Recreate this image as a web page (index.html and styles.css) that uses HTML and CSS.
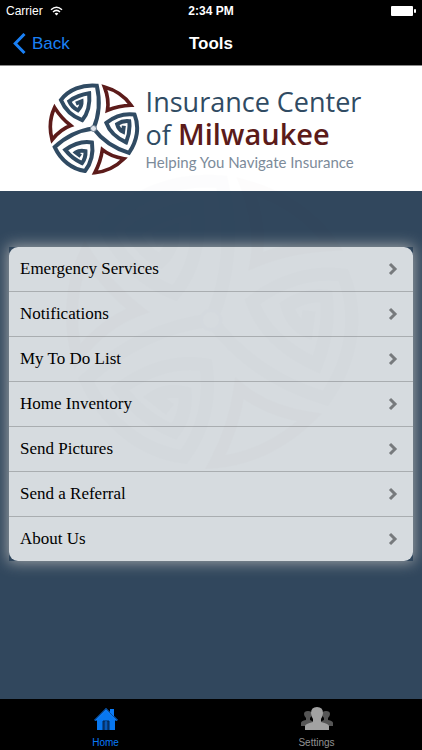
FILE: index.html
```html
<!DOCTYPE html>
<html lang="en">
<head>
  <meta charset="UTF-8" />
  <meta name="viewport" content="width=device-width, initial-scale=1.0"/>
  <title>Tools</title>
  <link rel="stylesheet" href="styles.css">
</head>
<body>
  <!-- Shared shapes -->
  <svg class="defs" width="0" height="0" aria-hidden="true">
    <defs>
      <g id="blade" fill="none">
        <path class="blade-blue" d="M160 167C176 130 181 86 170 38C126 34 86 50 62 81C74 110 98 131 126 142C143 122 150 94 147 61C125 64 104 72 87 85C92 97 101 106 113 112C121 104 125 96 124 85L107 92"/>
        <path class="blade-red" d="M193 42C226 51 255 71 273 97C248 98 224 103 202 112C206 89 202 65 193 42Z"/>
      </g>
      <symbol id="emblem" viewBox="20 27 280 280">
        <use href="#blade"/>
        <use href="#blade" transform="rotate(120 160 167)"/>
        <use href="#blade" transform="rotate(240 160 167)"/>
        <circle class="hub" cx="160" cy="167" r="9"/>
      </symbol>
      <symbol id="chevron" viewBox="0 0 10 14">
        <path d="M2 2L7 7L2 12" fill="none" stroke="#777a7d" stroke-width="3"/>
      </symbol>
    </defs>
  </svg>

  <header class="top">
    <div class="status">
      <div class="carrier">
        <span>Carrier</span>
        <svg width="13" height="10" viewBox="0 0 13 10" fill="none" stroke="#fff" stroke-width="1.5">
          <path d="M1 3.8Q6.500 -1.200 12 3.800M3 6Q6.500 2.800 10 6"/>
          <path d="M4.600 7.500Q6.500 6 8.400 7.500L6.500 9.500Z" fill="#fff" stroke="none"/>
        </svg>
      </div>
      <span class="time">2:34 PM</span>
      <svg class="battery" width="25" height="10" viewBox="0 0 25 10" fill="#fff">
        <rect width="22" height="10" rx="1"/>
        <rect x="23" y="3" width="2" height="4" rx="1"/>
      </svg>
    </div>
    <div class="navbar">
      <a class="back" href="#">
        <svg width="13" height="21" viewBox="0 0 13 21" fill="none" stroke="#1a80f5" stroke-width="3">
          <path d="M11.500 1L2.200 10.500L11.500 20"/>
        </svg>
        Back
      </a>
      <h1>Tools</h1>
    </div>
  </header>

  <main>
    <div class="banner">
      <svg class="logo" width="93" height="93"><use href="#emblem"/></svg>
      <div class="brand">
        <div class="name">Insurance Center</div>
        <div class="name">of <strong>Milwaukee</strong></div>
        <div class="tagline">Helping You Navigate Insurance</div>
      </div>
    </div>

    <div class="panel">
      <ul class="menu">
        <li><a href="#">Emergency Services <svg width="10" height="14"><use href="#chevron"/></svg></a></li>
        <li><a href="#">Notifications <svg width="10" height="14"><use href="#chevron"/></svg></a></li>
        <li><a href="#">My To Do List <svg width="10" height="14"><use href="#chevron"/></svg></a></li>
        <li><a href="#">Home Inventory <svg width="10" height="14"><use href="#chevron"/></svg></a></li>
        <li><a href="#">Send Pictures <svg width="10" height="14"><use href="#chevron"/></svg></a></li>
        <li><a href="#">Send a Referral <svg width="10" height="14"><use href="#chevron"/></svg></a></li>
        <li><a href="#">About Us <svg width="10" height="14"><use href="#chevron"/></svg></a></li>
      </ul>
    </div>

    <svg class="watermark" width="300" height="300" aria-hidden="true"><use href="#emblem"/></svg>
  </main>

  <nav class="tabs">
    <a class="active" href="#">
      <svg width="24" height="24" viewBox="0 0 24 24">
        <path d="M3 12V23H21V12L12 3Z" fill="#0877ef"/>
        <path d="M12 1L16 5V2H20V9L24 13L22 14L12 4L2 14L0 13Z" fill="#0a7bf7"/>
        <path d="M1 13L12 2L23 13" fill="none" stroke="#0b4c99"/>
        <path d="M9 23V14H15V23" fill="#063b7c" stroke="#05264f"/>
        <path d="M12 14V23" stroke="#0877ef"/>
      </svg>
      Home
    </a>
    <a href="#">
      <svg width="34" height="24" viewBox="0 0 34 24">
        <g fill="#555">
          <path id="side" d="M1 19V16Q1 14 6 13V11Q4 9 4 7Q4 4 8 4Q12 4 12 7Q12 9 10 11V13L14 15V19Z"/>
          <use href="#side" transform="matrix(-1 0 0 1 34 0)"/>
        </g>
        <path d="M5 23V19Q5 17 13 15V12Q11 9 11 6Q11 0 17 0Q23 0 23 6Q23 9 21 12V15Q29 17 29 19V23Z" fill="#a2a2a2"/>
      </svg>
      Settings
    </a>
  </nav>
</body>
</html>
```
FILE: styles.css
```css
* {
  box-sizing: border-box;
}

body {
  margin: 0;
  min-height: 100vh;
  display: flex;
  flex-direction: column;
  background: #31475d;
  font-family: "Liberation Sans", Arial, sans-serif;
}

a {
  text-decoration: none;
}

.defs {
  position: absolute;
}

/* Status bar and title */
.top {
  background: #000;
  color: #fff;
  border-bottom: 1px solid #8a8a8a;
}

.status {
  display: grid;
  grid-template-columns: 1fr auto 1fr;
  align-items: center;
  height: 22px;
  padding: 0 6px;
  font-size: 12px;
}

.carrier {
  display: flex;
  align-items: center;
  gap: 7px;
}

.time {
  font-weight: bold;
}

.battery {
  justify-self: end;
}

.navbar {
  display: grid;
  grid-template-columns: 1fr auto 1fr;
  align-items: center;
  height: 43px;
  padding: 0 13px;
}

.back {
  display: flex;
  align-items: center;
  gap: 6px;
  color: #1a80f5;
  font-size: 17px;
}

h1 {
  margin: 0;
  font-size: 17px;
}

/* Banner */
main {
  position: relative;
  flex: 1;
}

.banner {
  display: flex;
  align-items: center;
  justify-content: center;
  gap: 6px;
  height: 125px;
  padding-right: 14px;
  background: #fff;
}

.blade-blue {
  stroke: #304b63;
  stroke-width: 12;
}

.blade-red {
  stroke: #5c1b1a;
  stroke-width: 11;
}

.hub {
  fill: #dfe4ec;
  stroke: #6c7d90;
  stroke-width: 3;
}

.brand {
  padding-top: 2px;
  font-family: "Trebuchet MS", "Open Sans", sans-serif;
  color: #304b63;
}

.name {
  font-size: 27px;
  line-height: 32px;
}

.name strong {
  font-size: 29px;
  font-weight: 600;
  color: #5c1b1a;
}

.tagline {
  font-family: "Trebuchet MS", Lato, sans-serif;
  font-size: 15px;
  line-height: 22px;
  color: #7c8b9a;
}

/* Menu */
.panel {
  margin: 56px 9px;
  background: #31475d;
  box-shadow: 0 0 14px 1px #a5a8aa;
}

.menu {
  margin: 0;
  padding: 0;
  list-style: none;
  background: #d6dbdf;
  border-radius: 9px;
}

.menu li + li {
  border-top: 1px solid #a9adb0;
}

.menu a {
  display: flex;
  align-items: center;
  justify-content: space-between;
  height: 44px;
  padding: 0 15px 0 11px;
  font-family: "Liberation Serif", "Times New Roman", serif;
  font-size: 17px;
  color: #000;
}

.watermark {
  position: absolute;
  top: 104px;
  left: calc(50% - 150px);
  opacity: 0.008;
  pointer-events: none;
}

/* Tab bar */
.tabs {
  display: flex;
  height: 51px;
  background: #000;
}

.tabs a {
  flex: 1;
  display: flex;
  flex-direction: column;
  align-items: center;
  gap: 6px;
  padding-top: 8px;
  font-size: 10px;
  line-height: 12px;
  color: #929292;
}

.tabs .active {
  color: #0a7bf7;
}
```
